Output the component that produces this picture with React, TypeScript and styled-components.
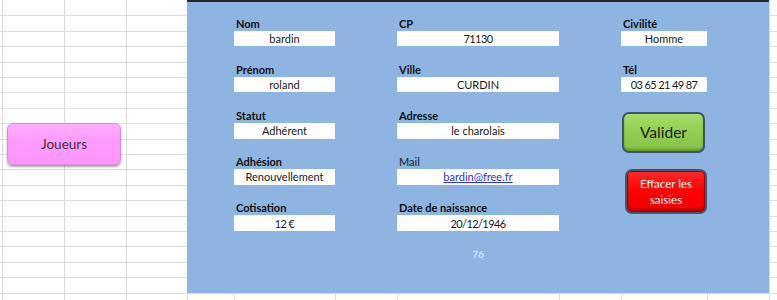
import styled, { createGlobalStyle } from 'styled-components';

const ROW = 15.4;
const GRID = '#dcdcdc';
const COL_LINES = [2, 64, 126, 187, 234, 335, 397, 559, 621, 707, 769];

const GlobalStyle = createGlobalStyle`
  html, body {
    margin: 0;
    padding: 0;
    background: #ffffff;
  }
  body {
    font-family: Lato, "Open Sans", sans-serif;
  }
`;

const verticalLines = COL_LINES.map(() => `linear-gradient(${GRID}, ${GRID})`).join(', ');
const verticalPositions = COL_LINES.map((x) => `${x}px 0`).join(', ');
const verticalSizes = COL_LINES.map(() => '1px 100%').join(', ');

const Sheet = styled.div`
  width: 777px;
  height: 300px;
  display: flex;
  overflow: hidden;
  background-color: #ffffff;
  background-image: ${verticalLines},
    repeating-linear-gradient(to bottom, transparent 0 ${ROW - 1}px, ${GRID} ${ROW - 1}px ${ROW}px);
  background-position: ${verticalPositions}, 0 0.6px;
  background-size: ${verticalSizes}, 100% 100%;
  background-repeat: no-repeat;
`;

const LeftPane = styled.div`
  width: 187px;
  flex: none;
  padding: 123px 0 0 7px;
  box-sizing: border-box;
`;

const JoueursButton = styled.button`
  width: 114px;
  height: 42px;
  border: 1px solid #d98ad9;
  border-radius: 6px;
  background: linear-gradient(#ffadff, #ff9cff 40%, #fb95fb);
  box-shadow: 0 2px 2px rgba(0, 0, 0, 0.35);
  font-family: Lato, sans-serif;
  font-size: 13.5px;
  color: #333333;
  cursor: pointer;
`;

const Panel = styled.div`
  width: 582px;
  height: 293px;
  flex: none;
  background: #8eb4e2;
  box-shadow: inset 0 2px 0 #262626;
  display: grid;
  grid-template-columns: 47px 101px 62px 162px 62px 86px 62px;
  grid-template-rows: repeat(19, ${ROW}px);
`;

const Label = styled.div<{ $col: number; $row: number; $light?: boolean }>`
  grid-column: ${(p) => p.$col};
  grid-row: ${(p) => p.$row};
  align-self: end;
  padding: 0 0 1px 2px;
  font-size: 11px;
  font-weight: ${(p) => (p.$light ? 500 : 700)};
  color: ${(p) => (p.$light ? '#2a2a2a' : '#111111')};
  white-space: nowrap;
`;

const Box = styled.div<{ $col: number; $row: number; $num?: boolean }>`
  grid-column: ${(p) => p.$col};
  grid-row: ${(p) => p.$row};
  background: #ffffff;
  display: flex;
  align-items: center;
  justify-content: center;
  font-size: 11px;
  letter-spacing: ${(p) => (p.$num ? '-0.6px' : 'normal')};
  color: #1a1a1a;
  white-space: nowrap;
`;

const MailLink = styled.a`
  color: #2f2fff;
  text-decoration: underline;
`;

const Valider = styled.button`
  grid-column: 6;
  grid-row: 8 / 11;
  width: 83px;
  height: 41px;
  margin: 4px 0 0 1px;
  border: 2px solid #3c5567;
  border-radius: 7px;
  background: linear-gradient(#a6dc6c, #93d052 45%, #86c145);
  box-shadow: inset 0 -2px 2px rgba(60, 100, 20, 0.45);
  font-family: Lato, sans-serif;
  font-size: 15.5px;
  color: #1a1a1a;
  padding: 0;
`;

const Effacer = styled.button`
  grid-column: 6;
  grid-row: 12 / 15;
  width: 82px;
  height: 45px;
  margin: 0 0 0 4px;
  border: 2px solid #425a6e;
  border-radius: 7px;
  background: linear-gradient(#ff2a2a, #ff0000 50%, #f00000);
  box-shadow: inset 0 0 0 1px #9a0000, inset 0 -3px 3px rgba(120, 0, 0, 0.5);
  font-family: Lato, sans-serif;
  font-size: 11.5px;
  line-height: 15.5px;
  color: #ffffff;
  padding: 0 8px;
`;

const PageNumber = styled.div`
  grid-column: 4;
  grid-row: 17;
  display: flex;
  align-items: center;
  justify-content: center;
  font-size: 10px;
  color: #eef3fb;
`;

const fields = [
  { label: 'Nom', value: 'bardin', col: 2, row: 2 },
  { label: 'Prénom', value: 'roland', col: 2, row: 5 },
  { label: 'Statut', value: 'Adhérent', col: 2, row: 8 },
  { label: 'Adhésion', value: 'Renouvellement', col: 2, row: 11 },
  { label: 'Cotisation', value: '12 €', col: 2, row: 14, num: true },
  { label: 'CP', value: '71130', col: 4, row: 2, num: true },
  { label: 'Ville', value: 'CURDIN', col: 4, row: 5 },
  { label: 'Adresse', value: 'le charolais', col: 4, row: 8 },
  { label: 'Date de naissance', value: '20/12/1946', col: 4, row: 14, num: true },
  { label: 'Civilité', value: 'Homme', col: 6, row: 2 },
  { label: 'Tél', value: '03 65 21 49 87', col: 6, row: 5, num: true },
];

export default function App() {
  return (
    <>
      <GlobalStyle />
      <Sheet>
        <LeftPane>
          <JoueursButton>Joueurs</JoueursButton>
        </LeftPane>
        <Panel>
          {fields.map((f) => [
            <Label key={f.label + '-l'} $col={f.col} $row={f.row}>
              {f.label}
            </Label>,
            <Box key={f.label + '-v'} $col={f.col} $row={f.row + 1} $num={f.num}>
              {f.value}
            </Box>,
          ])}
          <Label $col={4} $row={11} $light>
            Mail
          </Label>
          <Box $col={4} $row={12}>
            <MailLink href="#">bardin@free.fr</MailLink>
          </Box>
          <Valider>Valider</Valider>
          <Effacer>Effacer les saisies</Effacer>
          <PageNumber>76</PageNumber>
        </Panel>
      </Sheet>
    </>
  );
}
